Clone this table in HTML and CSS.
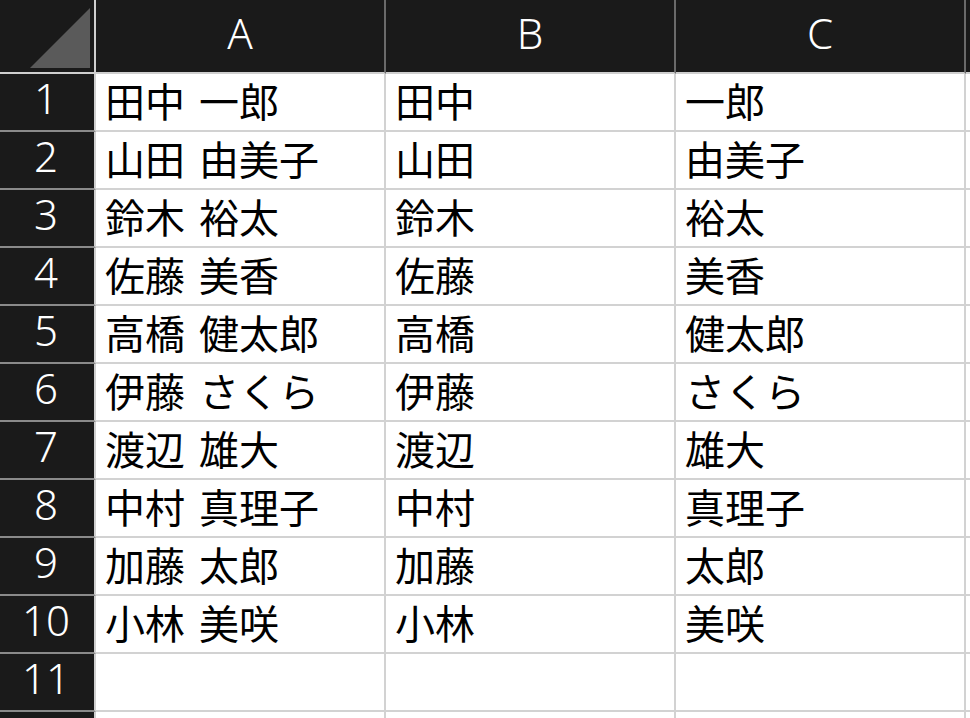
FILE: index.html
```html
<!DOCTYPE html>
<html lang="ja">
<head>
<meta charset="utf-8">
<title>Sheet</title>
<link rel="stylesheet" href="styles.css">
</head>
<body>
<div class="sheet">
  <div class="corner"><svg width="94" height="72" viewBox="0 0 94 72"><polygon points="30,68 90,8 90,68" fill="#5a5a5a"/></svg></div>
  <div class="colhead">A</div>
  <div class="colhead">B</div>
  <div class="colhead">C</div>
  <div class="colhead last"></div>

  <div class="rowhead">1</div><div class="cell">田中 一郎</div><div class="cell">田中</div><div class="cell">一郎</div><div class="cell last"></div>
  <div class="rowhead">2</div><div class="cell">山田 由美子</div><div class="cell">山田</div><div class="cell">由美子</div><div class="cell last"></div>
  <div class="rowhead">3</div><div class="cell">鈴木 裕太</div><div class="cell">鈴木</div><div class="cell">裕太</div><div class="cell last"></div>
  <div class="rowhead">4</div><div class="cell">佐藤 美香</div><div class="cell">佐藤</div><div class="cell">美香</div><div class="cell last"></div>
  <div class="rowhead">5</div><div class="cell">高橋 健太郎</div><div class="cell">高橋</div><div class="cell">健太郎</div><div class="cell last"></div>
  <div class="rowhead">6</div><div class="cell">伊藤 さくら</div><div class="cell">伊藤</div><div class="cell">さくら</div><div class="cell last"></div>
  <div class="rowhead">7</div><div class="cell">渡辺 雄大</div><div class="cell">渡辺</div><div class="cell">雄大</div><div class="cell last"></div>
  <div class="rowhead">8</div><div class="cell">中村 真理子</div><div class="cell">中村</div><div class="cell">真理子</div><div class="cell last"></div>
  <div class="rowhead">9</div><div class="cell">加藤 太郎</div><div class="cell">加藤</div><div class="cell">太郎</div><div class="cell last"></div>
  <div class="rowhead">10</div><div class="cell">小林 美咲</div><div class="cell">小林</div><div class="cell">美咲</div><div class="cell last"></div>
  <div class="rowhead">11</div><div class="cell"></div><div class="cell"></div><div class="cell"></div><div class="cell last"></div>
  <div class="rowhead"></div><div class="cell"></div><div class="cell"></div><div class="cell"></div><div class="cell last"></div>
</div>
</body>
</html>
```

FILE: styles.css
```css
html, body {
  margin: 0;
  padding: 0;
  background: #ffffff;
  overflow: hidden;
}

.sheet {
  display: grid;
  grid-template-columns: 96px 290px 290px 290px 1fr;
  grid-template-rows: 74px;
  grid-auto-rows: 58px;
  width: 970px;
  height: 718px;
  overflow: hidden;
  font-family: "Noto Sans CJK JP", "Noto Sans", sans-serif;
}

.corner {
  background: #1a1a1a;
  border-right: 2px solid #cfcfcf;
  border-bottom: 2px solid #cfcfcf;
  box-sizing: border-box;
  overflow: hidden;
}

.corner svg {
  display: block;
}

.colhead {
  background: #1a1a1a;
  color: #ffffff;
  border-right: 2px solid #6a6a6a;
  border-bottom: 2px solid #cfcfcf;
  box-sizing: border-box;
  display: flex;
  align-items: center;
  justify-content: center;
  font-family: "Noto Sans", sans-serif;
  font-weight: 300;
  font-size: 42px;
  line-height: 48px;
  padding-bottom: 7px;
}

.rowhead {
  background: #1a1a1a;
  color: #ffffff;
  border-right: 2px solid #cfcfcf;
  border-bottom: 2px solid #8a8a8a;
  box-sizing: border-box;
  display: flex;
  align-items: center;
  justify-content: center;
  font-family: "Noto Sans", sans-serif;
  font-weight: 300;
  font-size: 42px;
  line-height: 46px;
  padding-bottom: 8px;
  padding-right: 2px;
}

.cell {
  background: #ffffff;
  color: #000000;
  border-right: 2px solid #d2d2d2;
  border-bottom: 2px solid #d2d2d2;
  box-sizing: border-box;
  display: flex;
  align-items: center;
  padding-left: 9px;
  padding-bottom: 4px;
  font-size: 40px;
  line-height: 48px;
  font-weight: 400;
  word-spacing: 5px;
  white-space: nowrap;
}

.last {
  border-right: none;
}
```
